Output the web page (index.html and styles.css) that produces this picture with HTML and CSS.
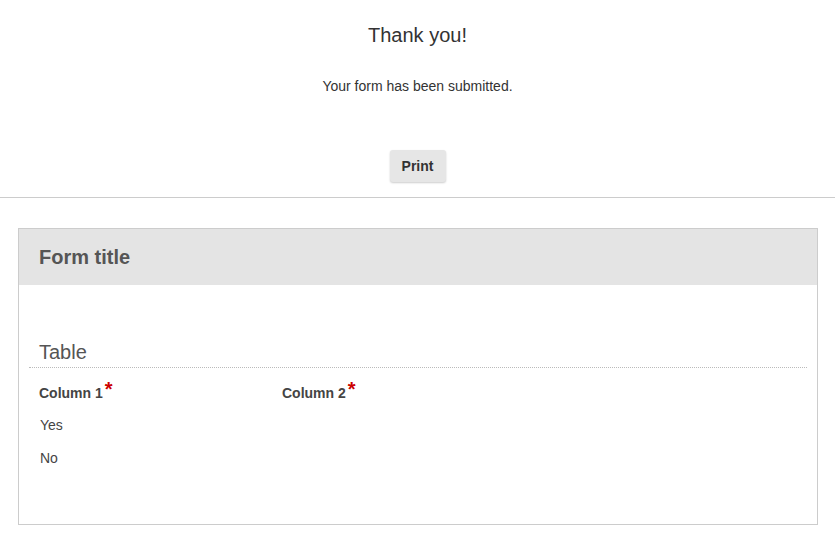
FILE: index.html
```html
<!DOCTYPE html>
<html lang="en">
<head>
  <meta charset="UTF-8" />
  <title>Thank you</title>
  <link rel="stylesheet" href="styles.css">
</head>
<body>
  <div class="confirm">
    <h1 class="confirm-title">Thank you!</h1>
    <p class="confirm-text">Your form has been submitted.</p>
    <button class="print-btn" type="button">Print</button>
  </div>
  <hr class="divider" />

  <div class="form-box">
    <div class="form-head">Form title</div>
    <div class="form-body">
      <div class="section-title">Table</div>
      <div class="table">
        <div class="row head">
          <div class="cell col1">Column 1<span class="req">*</span></div>
          <div class="cell">Column 2<span class="req">*</span></div>
        </div>
        <div class="row">
          <div class="cell col1">Yes</div>
          <div class="cell"></div>
        </div>
        <div class="row">
          <div class="cell col1">No</div>
          <div class="cell"></div>
        </div>
      </div>
    </div>
  </div>
</body>
</html>
```

FILE: styles.css
```css
html, body {
  margin: 0;
  padding: 0;
  background: #fff;
  color: #333;
  font-family: 'Liberation Sans', Arial, sans-serif;
}

.confirm {
  text-align: center;
  padding-top: 23px;
}

.confirm-title {
  margin: 0;
  font-size: 20px;
  font-weight: normal;
  line-height: 24px;
  color: #333;
}

.confirm-text {
  margin: 29px 0 0;
  font-size: 14px;
  line-height: 20px;
  color: #333;
}

.print-btn {
  margin-top: 54px;
  width: 56px;
  height: 32px;
  font-family: 'Liberation Sans', Arial, sans-serif;
  font-size: 14px;
  font-weight: bold;
  color: #333;
  background: #e6e6e6;
  border: none;
  border-radius: 3px;
  box-shadow: 0 1px 2px rgba(0, 0, 0, 0.2);
  cursor: pointer;
}

.divider {
  margin: 15px 0 0;
  border: none;
  border-top: 1px solid #ccc;
}

.form-box {
  margin: 30px 17px 0 18px;
  border: 1px solid #ccc;
}

.form-head {
  background: #e4e4e4;
  height: 56px;
  line-height: 56px;
  padding: 0 20px;
  font-size: 20px;
  font-weight: bold;
  color: #555;
}

.form-body {
  padding: 54px 10px 50px;
}

.section-title {
  font-size: 20px;
  line-height: 26px;
  color: #555;
  padding: 0 10px 2px;
  border-bottom: 1px dotted #bbb;
}

.table {
  padding-top: 7px;
}

.row {
  display: flex;
  height: 33px;
  align-items: center;
  font-size: 14px;
  color: #444;
}

.row.head {
  height: 28px;
  font-weight: bold;
  align-items: flex-end;
  padding-bottom: 5px;
}

.cell {
  padding: 0 10px;
}

.col1 {
  width: 223px;
}

.row:not(.head) .cell {
  padding-left: 11px;
}

.req {
  color: #c00;
  font-size: 20px;
  position: relative;
  top: -2px;
  margin-left: 2px;
}
```
